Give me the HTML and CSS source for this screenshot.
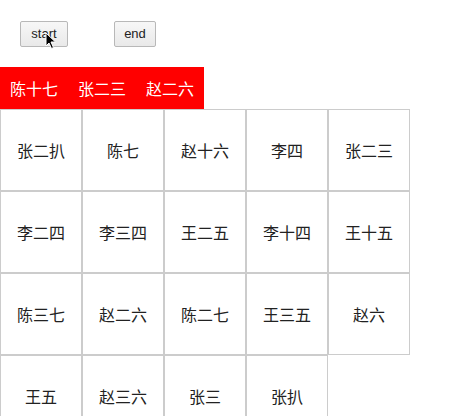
FILE: index.html
```html
<!DOCTYPE html>
<html>
<head>
<meta charset="utf-8">
<link rel="stylesheet" href="styles.css">
</head>
<body>
<div class="controls">
  <button class="btn btn-start">start</button>
  <button class="btn btn-end">end</button>
  <svg class="cursor" width="12" height="18" viewBox="0 0 12 18"><path d="M1 1 L1 14 L4 11 L6.5 16.5 L8.5 15.5 L6 10 L10.5 10 Z" fill="#000" stroke="#fff" stroke-width="1"/></svg>
</div>
<div class="selected">
  <span class="sel-item">陈十七</span>
  <span class="sel-item">张二三</span>
  <span class="sel-item">赵二六</span>
</div>
<div class="grid">
  <div class="cell">张二扒</div>
  <div class="cell">陈七</div>
  <div class="cell">赵十六</div>
  <div class="cell">李四</div>
  <div class="cell">张二三</div>
  <div class="cell">李二四</div>
  <div class="cell">李三四</div>
  <div class="cell">王二五</div>
  <div class="cell">李十四</div>
  <div class="cell">王十五</div>
  <div class="cell">陈三七</div>
  <div class="cell">赵二六</div>
  <div class="cell">陈二七</div>
  <div class="cell">王三五</div>
  <div class="cell">赵六</div>
  <div class="cell">王五</div>
  <div class="cell">赵三六</div>
  <div class="cell">张三</div>
  <div class="cell">张扒</div>
</div>
</body>
</html>
```
FILE: styles.css
```css
html, body {
  margin: 0;
  padding: 0;
  background: #fff;
}
body {
  font-family: "Noto Sans CJK SC", "Liberation Sans", sans-serif;
}
.controls {
  position: relative;
  display: flex;
  gap: 46px;
  padding: 21px 0 0 20px;
  height: 26px;
  margin-bottom: 20px;
}
.btn {
  height: 26px;
  margin: 0;
  padding: 0;
  border: 1px solid #b8b8b8;
  border-radius: 2px;
  background: linear-gradient(#f7f7f7, #e9e9e9);
  font-family: "Liberation Sans", Arial, sans-serif;
  font-size: 13px;
  color: #222;
  line-height: 24px;
}
.btn-start { width: 48px; }
.btn-end { width: 42px; }
.cursor {
  position: absolute;
  left: 45px;
  top: 32px;
}
.selected {
  display: inline-flex;
  background: #ff0000;
  height: 42px;
  align-items: center;
}
.sel-item {
  padding: 0 10px;
  color: #fff;
  font-size: 16px;
  line-height: 42px;
  width: 48px;
}
.grid {
  display: flex;
  flex-wrap: wrap;
  width: 410px;
}
.cell {
  width: 80px;
  height: 80px;
  border: 1px solid #cccccc;
  display: flex;
  align-items: center;
  justify-content: center;
  font-size: 16px;
  color: #222;
}
```
